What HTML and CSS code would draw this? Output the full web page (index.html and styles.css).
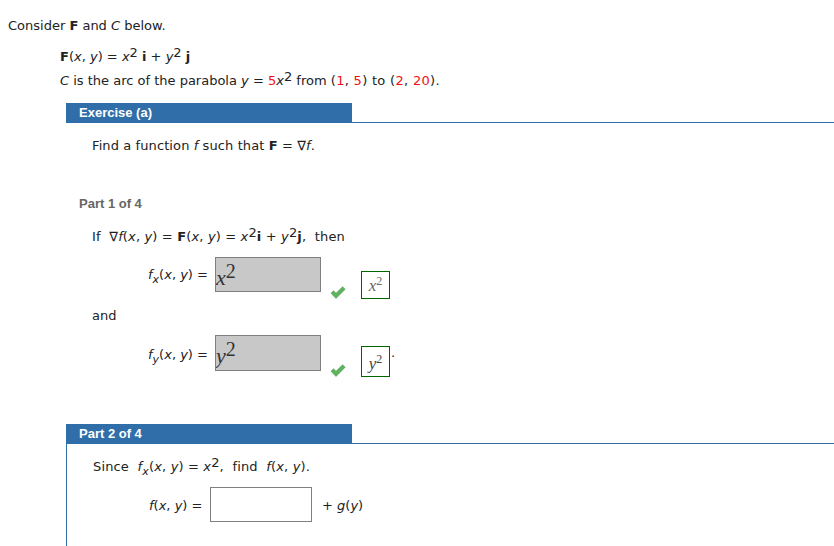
FILE: index.html
```html
<!DOCTYPE html>
<html lang="en">
<head>
<meta charset="utf-8">
<title>Consider F and C</title>
<link rel="stylesheet" href="styles.css">
</head>
<body>
<p class="intro">Consider <b>F</b> and <i>C</i> below.</p>
<div class="given">
  <p class="line-f"><b>F</b>(<i>x</i>, <i>y</i>) = <i>x</i><sup>2</sup> <b>i</b> + <i>y</i><sup>2</sup> <b>j</b></p>
  <p class="line-c"><i>C</i> is the arc of the parabola <i>y</i> = <span class="red">5</span><i>x</i><sup>2</sup> from <span class="points">(<span class="red">1</span>, <span class="red">5</span>) to (<span class="red">2</span>, <span class="red">20</span>).</span></p>
</div>
<section class="exercise">
  <div class="bar"><h2 class="tab">Exercise (a)</h2></div>
  <p class="task">Find a function <i>f</i> such that <b>F</b> = ∇<i>f</i>.</p>
  <h3 class="part-done">Part 1 of 4</h3>
  <p class="lead">If&nbsp; ∇<i>f</i>(<i>x</i>, <i>y</i>) = <b>F</b>(<i>x</i>, <i>y</i>) = <i>x</i><sup>2</sup><b>i</b> + <i>y</i><sup>2</sup><b>j</b>,&nbsp; then</p>
  <div class="answer first">
    <span class="label"><i>f<sub>x</sub></i>(<i>x</i>, <i>y</i>) =</span>
    <div class="entry"><i>x</i><sup>2</sup></div>
    <svg class="check" viewBox="0 0 16 13"><path d="M1 7.2 L3.6 4.8 L6 7.2 L12.6 .8 L15.2 3.2 L6 12.4 Z" fill="#5fb55f" stroke="#4d9a4d" stroke-width=".6"/></svg>
    <div class="preview"><i>x</i><sup>2</sup></div>
  </div>
  <p class="and">and</p>
  <div class="answer second">
    <span class="label"><i>f<sub>y</sub></i>(<i>x</i>, <i>y</i>) =</span>
    <div class="entry"><i>y</i><sup>2</sup></div>
    <svg class="check" viewBox="0 0 16 13"><path d="M1 7.2 L3.6 4.8 L6 7.2 L12.6 .8 L15.2 3.2 L6 12.4 Z" fill="#5fb55f" stroke="#4d9a4d" stroke-width=".6"/></svg>
    <div class="preview tall"><i>y</i><sup>2</sup></div>
    <span class="dot">.</span>
  </div>
</section>
<section class="part-two">
  <div class="bar"><h2 class="tab">Part 2 of 4</h2></div>
  <p class="since">Since&nbsp; <i>f<sub>x</sub></i>(<i>x</i>, <i>y</i>) = <i>x</i><sup>2</sup>,&nbsp; find&nbsp; <i>f</i>(<i>x</i>, <i>y</i>).</p>
  <div class="answer open">
    <span class="label"><i>f</i>(<i>x</i>, <i>y</i>) =</span>
    <div class="blank"></div>
    <span class="rest">+ <i>g</i>(<i>y</i>)</span>
  </div>
</section>
</body>
</html>
```
FILE: styles.css
```css
html, body { margin: 0; padding: 0; background: #fff; }
body {
  width: 834px;
  height: 546px;
  overflow: hidden;
  font: 13px/17px "DejaVu Sans", Verdana, sans-serif;
  color: #222;
}
p, h2, h3 { margin: 0; }
sup { font-size: 13px; line-height: 0; vertical-align: 4px; }
sub { font-size: 11px; line-height: 0; vertical-align: -4px; }
.red { color: #f01010; }
.intro { padding: 17px 0 0 8px; }
.given { padding: 14px 0 0 60px; }
.line-c { padding-top: 7px; }
.points { letter-spacing: .3px; }
.exercise { margin: 14px 0 0 66px; height: 321px; }
.bar { border-bottom: 1px solid #2f6ea9; height: 19px; }
.tab {
  width: 273px;
  height: 20px;
  padding-left: 13px;
  background: #2f6ea9;
  color: #fff;
  font: bold 13px/19px "Liberation Sans", Arial, sans-serif;
}
.task { padding: 14px 0 0 26px; letter-spacing: .1px; }
.part-done {
  padding: 42px 0 0 13px;
  color: #666;
  font: bold 13px/16px "Liberation Sans", Arial, sans-serif;
}
.lead { padding: 16px 0 0 26px; letter-spacing: .15px; }
.answer { display: flex; align-items: flex-start; }
.label { width: 133px; box-sizing: border-box; padding-left: 82px; white-space: nowrap; }
.first { margin-top: 12px; height: 42px; }
.second { margin-top: 11px; height: 44px; }
.first .label { padding-top: 9px; }
.second .label { padding-top: 11px; }
.entry {
  width: 104px;
  height: 33px;
  margin-left: 16px;
  background: #c8c8c8;
  border: 1px solid #808080;
  font: 22px/40px "Liberation Serif", "Times New Roman", serif;
  color: #333;
  white-space: nowrap;
  overflow: hidden;
}
.second .entry { height: 34px; }
.entry sup { font-size: 20px; vertical-align: 7px; }
.check { width: 16px; height: 13px; margin: 29px 0 0 9px; }
.second .check { margin-top: 29px; }
.preview {
  width: 27px;
  height: 26px;
  margin: 14px 0 0 15px;
  border: 1px solid #060;
  font: 17px/28px "Liberation Serif", "Times New Roman", serif;
  color: #666;
  text-align: center;
}
.preview sup { font-size: 12px; vertical-align: 6px; }
.tall { height: 29px; margin-top: 11px; line-height: 33px; color: #444; }
.dot { margin: 9px 0 0 1px; }
.and { padding: 14px 0 0 26px; margin-top: -6px; }
.part-two { margin: 0 0 0 66px; height: 122px; border-left: 1px solid #2f6ea9; }
.part-two .bar { margin-left: -1px; }
.since { padding: 14px 0 0 26px; letter-spacing: .15px; }
.open { margin-top: 12px; }
.open .label { width: 143px; padding: 10px 0 0 82px; }
.blank { width: 100px; height: 33px; background: #fff; border: 1px solid #808080; }
.rest { padding: 10px 0 0 10px; }
```
